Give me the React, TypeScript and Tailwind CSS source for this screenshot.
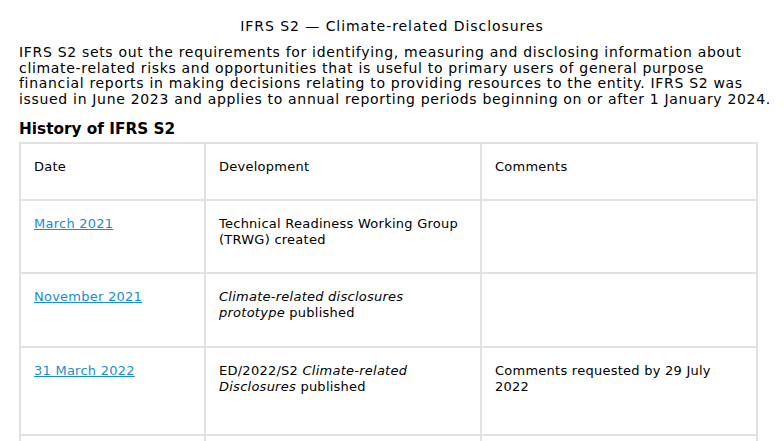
export default function App() {
  const cell = "border-2 border-[#e2e2e2] px-[13px] pt-[15px] pb-[13px] align-top";
  const link = "text-[#1a8dd0] underline";
  return (
    <div className="bg-white w-[784px] h-[441px] overflow-hidden text-black" style={{ fontFamily: '"DejaVu Sans", sans-serif' }}>
      <h1 className="text-center text-[14px] tracking-[0.95px] pt-[16px] leading-[20px]">IFRS S2 — Climate-related Disclosures</h1>
      <p className="ml-[19px] mt-[9px] text-[14px] tracking-[0.68px] leading-[15.5px] whitespace-nowrap">
        IFRS S2 sets out the requirements for identifying, measuring and disclosing information about<br />
        climate-related risks and opportunities that is useful to primary users of general purpose<br />
        financial reports in making decisions relating to providing resources to the entity. IFRS S2 was<br />
        issued in June 2023 and applies to annual reporting periods beginning on or after 1 January 2024.
      </p>
      <h2 className="mx-[19px] mt-[12px] text-[15.3px] font-bold leading-[20px]">History of IFRS S2</h2>
      <table className="ml-[19px] mt-[3px] w-[739px] border-collapse text-[13px] tracking-[0.25px] leading-[16px]">
        <colgroup>
          <col className="w-[185px]" />
          <col className="w-[276px]" />
          <col />
        </colgroup>
        <tbody>
          <tr className="h-[57px]">
            <td className={cell}>Date</td>
            <td className={cell}>Development</td>
            <td className={cell}>Comments</td>
          </tr>
          <tr className="h-[73px]">
            <td className={cell}><a className={link}>March 2021</a></td>
            <td className={cell}>Technical Readiness Working Group<br />(TRWG) created</td>
            <td className={cell}></td>
          </tr>
          <tr className="h-[74px]">
            <td className={cell}><a className={link}>November 2021</a></td>
            <td className={cell}><i>Climate-related disclosures</i><br /><i>prototype</i> published</td>
            <td className={cell}></td>
          </tr>
          <tr className="h-[88px]">
            <td className={cell}><a className={link}>31 March 2022</a></td>
            <td className={cell}>ED/2022/S2 <i>Climate-related</i><br /><i>Disclosures</i> published</td>
            <td className={cell}>Comments requested by 29 July<br />2022</td>
          </tr>
          <tr className="h-[60px]">
            <td className={cell}></td>
            <td className={cell}></td>
            <td className={cell}></td>
          </tr>
        </tbody>
      </table>
    </div>
  );
}
